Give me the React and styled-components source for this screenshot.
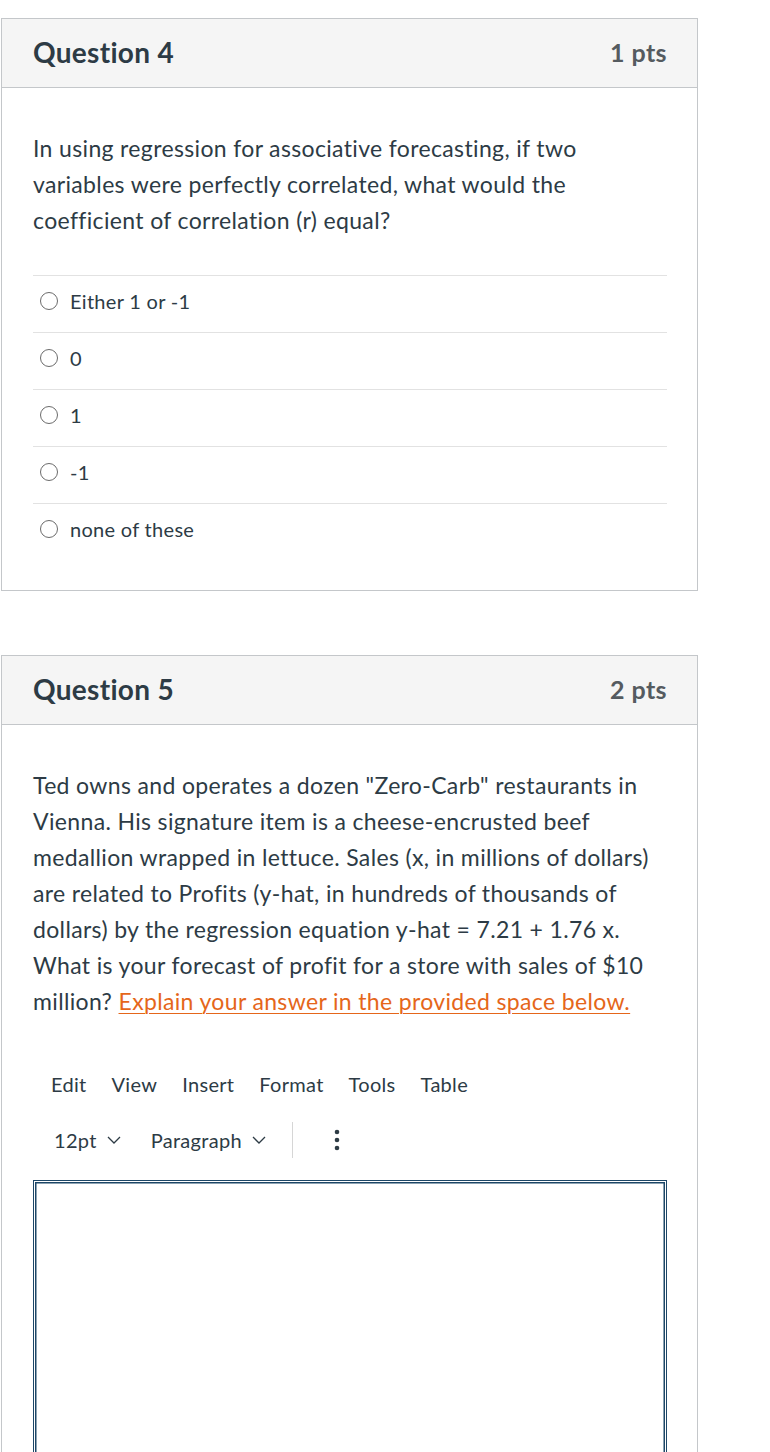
import React from "react";
import styled, { createGlobalStyle } from "styled-components";

const GlobalStyle = createGlobalStyle`
  html, body {
    margin: 0;
    padding: 0;
    background: #fff;
  }
  body {
    font-family: Lato, "Noto Sans", "Liberation Sans", sans-serif;
    color: #2d3b45;
  }
`;

const Page = styled.div`
  padding: 18px 0 0 1px;
  display: flex;
  flex-direction: column;
  gap: 64px;
`;

const Card = styled.div`
  width: 695px;
  border: 1px solid #c4c7ca;
  background: #fff;
`;

const Header = styled.div`
  display: flex;
  align-items: center;
  justify-content: space-between;
  padding: 0 30px 2px 31px;
  background: #f5f5f5;
  border-bottom: 1px solid #c4c7ca;
  box-sizing: border-box;
  height: 69px;
`;

const Title = styled.div`
  font-size: 28px;
  font-weight: 700;
  letter-spacing: 0.3px;
  color: #2d3b45;
`;

const Points = styled.div`
  font-size: 25px;
  font-weight: 700;
  letter-spacing: 0.4px;
  color: #555b60;
`;

const Body = styled.div`
  padding: 42px 30px 30px 31px;
`;

const Text = styled.p`
  margin: 0;
  font-size: 23px;
  letter-spacing: 0.35px;
  line-height: 36px;
  color: #2d3b45;
`;

const Link = styled.a`
  color: #e5661a;
  text-decoration: underline;
  text-underline-offset: 3px;
  text-decoration-thickness: 1px;
`;

const Answers = styled.div`
  margin-top: 37px;
`;

const AnswerRow = styled.label`
  display: flex;
  align-items: center;
  gap: 12px;
  padding: 0 0 6px 7px;
  box-sizing: border-box;
  height: 57px;
  border-top: 1px solid #e2e2e2;
  font-size: 20px;
  letter-spacing: 0.3px;
  color: #2d3b45;
`;

const Radio = styled.span`
  width: 16px;
  height: 16px;
  border: 1.5px solid #6b6b6b;
  border-radius: 50%;
  flex-shrink: 0;
`;

const MenuBar = styled.div`
  display: flex;
  gap: 25px;
  height: 40px;
  align-items: center;
  margin-top: 45px;
  padding-left: 18px;
  font-size: 20px;
  letter-spacing: 0.3px;
  color: #2d3b45;
`;

const Toolbar = styled.div`
  display: flex;
  align-items: center;
  height: 40px;
  margin-top: 16px;
  padding-left: 21px;
  font-size: 20px;
  letter-spacing: 0.3px;
  color: #2d3b45;
`;

const Select = styled.span`
  display: flex;
  align-items: center;
  gap: 10px;
  margin-right: ${(p) => p.$gap}px;
`;

const Divider = styled.span`
  width: 1px;
  height: 36px;
  background: #d6d6d6;
`;

const More = styled.span`
  margin-left: 41px;
  display: flex;
`;

const Editor = styled.div`
  margin-top: 20px;
  height: 300px;
  border: 1px solid #1d4667;
  box-shadow: inset 0 0 0 1px #fff, inset 0 0 0 2.5px #1d4667;
`;

const Chevron = () => (
  <svg width="14" height="8" viewBox="0 0 14 8">
    <path d="M1 1l6 6 6-6" fill="none" stroke="#2d3b45" strokeWidth="1.3" />
  </svg>
);

const Dots = () => (
  <svg width="6" height="22" viewBox="0 0 6 22">
    <circle cx="3" cy="3" r="2.3" fill="#2d3b45" />
    <circle cx="3" cy="11" r="2.3" fill="#2d3b45" />
    <circle cx="3" cy="19" r="2.3" fill="#2d3b45" />
  </svg>
);

const answers = ["Either 1 or -1", "0", "1", "-1", "none of these"];

export default function App() {
  return (
    <>
      <GlobalStyle />
      <Page>
        <Card>
          <Header>
            <Title>Question 4</Title>
            <Points>1 pts</Points>
          </Header>
          <Body>
            <Text>
              In using regression for associative forecasting, if two
              variables were perfectly correlated, what would the coefficient
              of correlation (r) equal?
            </Text>
            <Answers>
              {answers.map((a) => (
                <AnswerRow key={a}>
                  <Radio />
                  {a}
                </AnswerRow>
              ))}
            </Answers>
          </Body>
        </Card>

        <Card>
          <Header>
            <Title>Question 5</Title>
            <Points>2 pts</Points>
          </Header>
          <Body>
            <Text>
              Ted owns and operates a dozen "Zero-Carb" restaurants in Vienna.
              His signature item is a cheese-encrusted beef medallion wrapped
              in lettuce. Sales (x, in millions of dollars) are related to
              Profits (y-hat, in hundreds of thousands of dollars) by the
              regression equation y-hat = 7.21 + 1.76 x. What is your forecast
              of profit for a store with sales of $10 million?{" "}
              <Link>Explain your answer in the provided space below.</Link>
            </Text>
            <MenuBar>
              <span>Edit</span>
              <span>View</span>
              <span>Insert</span>
              <span>Format</span>
              <span>Tools</span>
              <span>Table</span>
            </MenuBar>
            <Toolbar>
              <Select $gap={30}>
                12pt <Chevron />
              </Select>
              <Select $gap={26}>
                Paragraph <Chevron />
              </Select>
              <Divider />
              <More>
                <Dots />
              </More>
            </Toolbar>
            <Editor />
          </Body>
        </Card>
      </Page>
    </>
  );
}
